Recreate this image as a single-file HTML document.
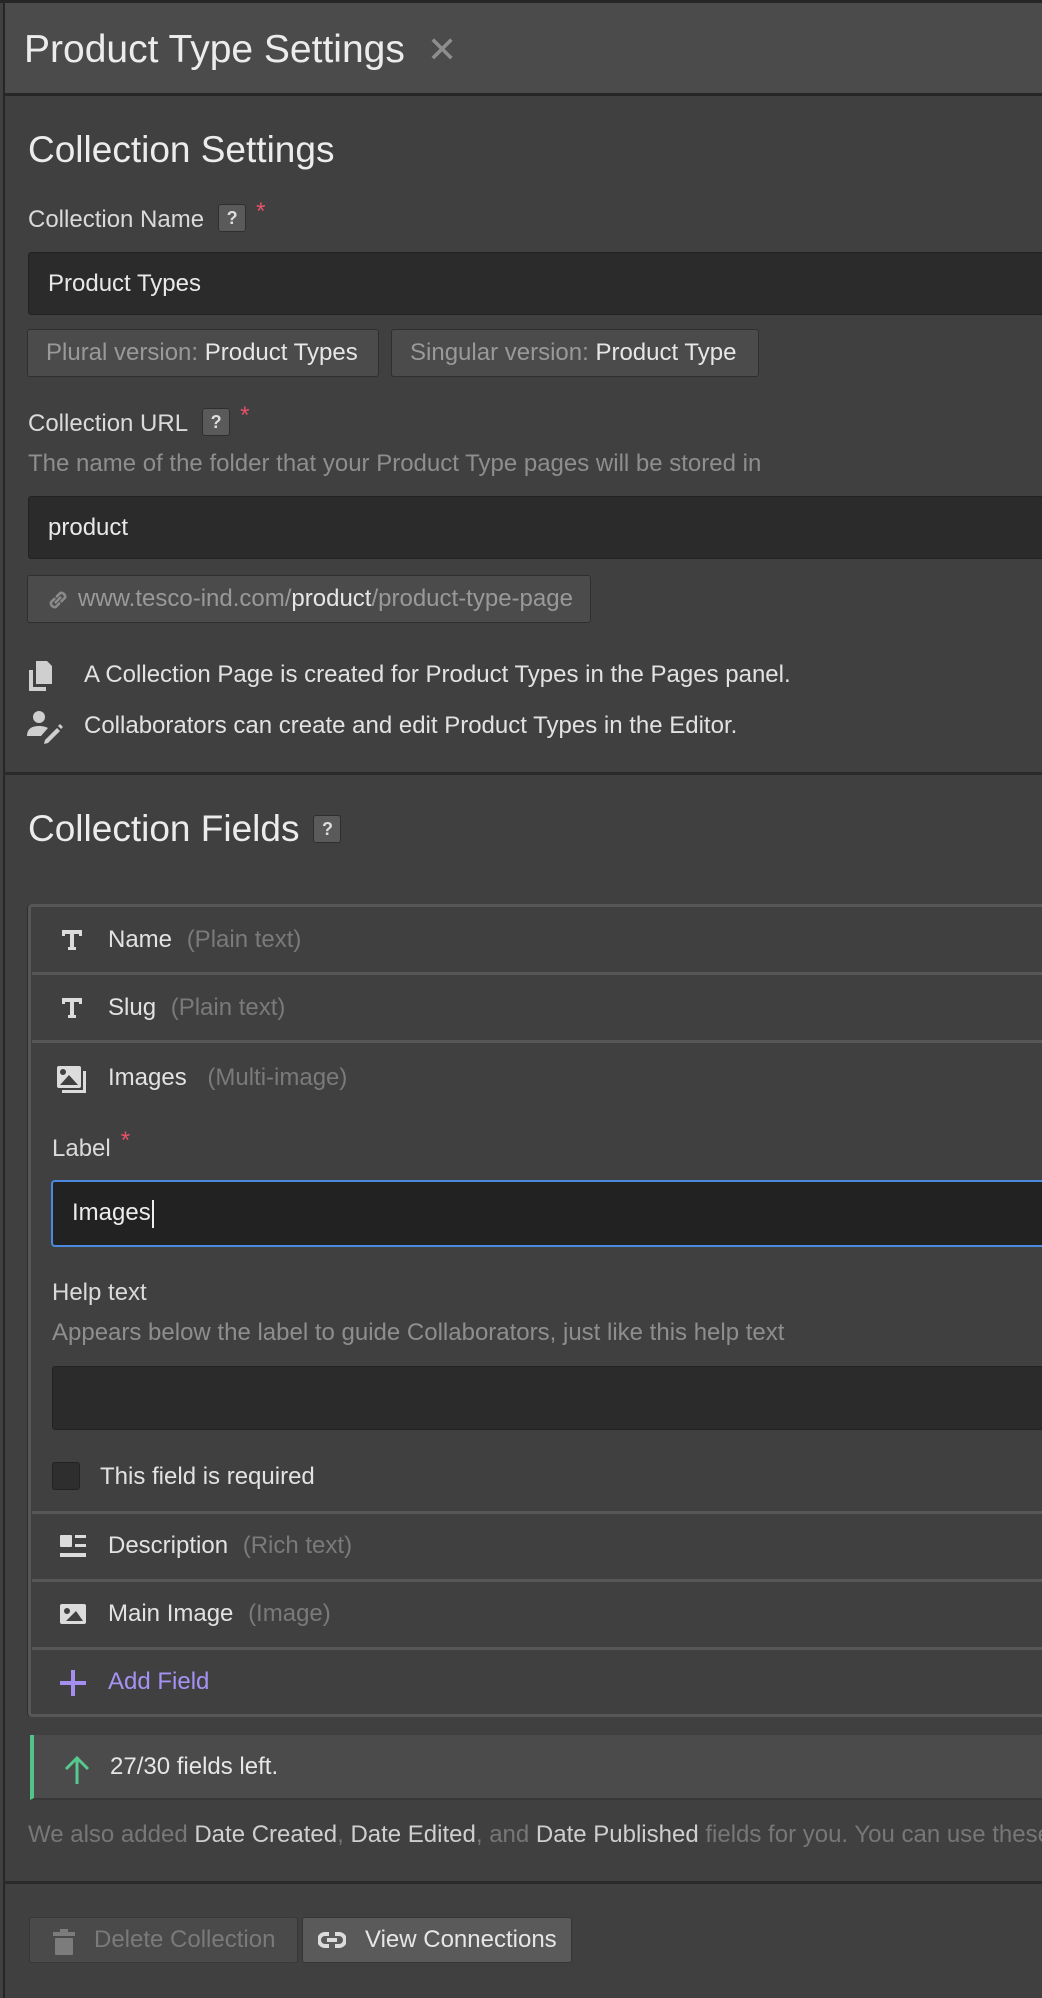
<!DOCTYPE html>
<html><head><meta charset="utf-8"><style>
*{margin:0;padding:0;box-sizing:border-box}
body{width:1042px;height:1998px;background:#404040;font-family:"Liberation Sans",sans-serif;position:relative;overflow:hidden;color:#ddd}
.a{position:absolute;white-space:nowrap}
.t{position:absolute;white-space:nowrap;line-height:30px;height:30px}
.q{display:inline-block;width:28px;height:28px;background:#5a5a5a;border:1px solid #2e2e2e;border-radius:3px;color:#ddd;font-size:18px;font-weight:bold;text-align:center;line-height:26px;vertical-align:middle;margin-left:14px;position:relative;top:-3px}
.star{color:#e8536a;font-size:24px;margin-left:10px;position:relative;top:-8px}
.inp{position:absolute;left:28px;right:-10px;background:#2b2b2b;border:1px solid #222;border-radius:3px}
.pill{position:absolute;background:#4b4b4b;border:1px solid #2f2f2f;border-radius:3px;font-size:24px;line-height:46px;padding-left:18px;color:#999}
.pill b{font-weight:normal;color:#e6e6e6}
.row{position:absolute;left:32px;right:0;border-bottom:3px solid #575757}
.g{color:#7a7a7a}
</style></head><body>
<div class="a" style="left:0;top:0;width:1042px;height:3px;background:#262626"></div>
<div class="a" style="left:3px;top:0;width:2px;height:1998px;background:#262626"></div>
<div class="a" style="left:5px;top:3px;width:1037px;height:91px;background:#4b4b4b"></div>
<div class="a" style="left:3px;top:93px;width:1039px;height:3px;background:#262626"></div>
<div class="t" style="left:24px;top:27px;height:46px;line-height:46px;font-size:39px;color:#ececec">Product Type Settings</div>
<div class="a" style="left:427px;top:32px;font-size:36px;line-height:36px;color:#8e8e8e">✕</div>

<div class="t" style="left:28px;top:129px;height:42px;line-height:42px;font-size:37px;color:#ececec">Collection Settings</div>

<div class="t" style="left:28px;top:205px;font-size:24px;color:#dadada">Collection Name<span class="q">?</span><span class="star">*</span></div>
<div class="inp" style="top:252px;height:63px"><div class="t" style="left:19px;top:16px;font-size:24px;color:#e8e8e8">Product Types</div></div>

<div class="pill" style="left:27px;top:329px;width:352px;height:48px">Plural version: <b>Product Types</b></div>
<div class="pill" style="left:391px;top:329px;width:368px;height:48px">Singular version: <b>Product Type</b></div>

<div class="t" style="left:28px;top:409px;font-size:24px;color:#dadada">Collection URL<span class="q">?</span><span class="star">*</span></div>
<div class="t" style="left:28px;top:449px;font-size:24px;color:#8e8e8e">The name of the folder that your Product Type pages will be stored in</div>
<div class="inp" style="top:496px;height:63px"><div class="t" style="left:19px;top:16px;font-size:24px;color:#e8e8e8">product</div></div>

<div class="pill" style="left:27px;top:575px;width:564px;height:48px;padding-left:50px">
<svg style="position:absolute;left:17px;top:11px" width="26" height="26" viewBox="0 0 22 22" fill="none" stroke="#8a8a8a" stroke-width="2.2" stroke-linecap="round"><path d="M9 13 L13 9"/><path d="M8 10 L5 13 A3.5 3.5 0 0 0 9 17 L12 14"/><path d="M14 12 L17 9 A3.5 3.5 0 0 0 13 5 L10 8"/></svg>www.tesco-ind.com/<b>product</b>/product-type-page</div>

<svg class="a" style="left:28px;top:661px" width="26" height="30" viewBox="0 0 26 30"><path d="M8 0 H19 L24 5 V23 H8 Z" fill="#cfcfcf"/><path d="M1 9 H5 V26 H18 V30 H1 Z" fill="#cfcfcf"/></svg>
<div class="t" style="left:84px;top:660px;font-size:24px;color:#e2e2e2">A Collection Page is created for Product Types in the Pages panel.</div>
<svg class="a" style="left:27px;top:710px" width="36" height="34" viewBox="0 0 36 34"><circle cx="12" cy="7" r="6" fill="#cfcfcf"/><path d="M0 26 C0 18 6 16 12 16 C16 16 19 17 21 18 L14 26 Z" fill="#cfcfcf"/><path d="M18 30 L30 18 L33 21 L21 33 L17 34 Z" fill="#cfcfcf"/><path d="M31 16 L33 14 L36 17 L34 19 Z" fill="#cfcfcf"/></svg>
<div class="t" style="left:84px;top:711px;font-size:24px;color:#e2e2e2">Collaborators can create and edit Product Types in the Editor.</div>

<div class="a" style="left:3px;top:772px;width:1039px;height:3px;background:#2a2a2a"></div>

<div class="t" style="left:28px;top:808px;height:42px;line-height:42px;font-size:37px;color:#ececec">Collection Fields<span class="q" style="margin-left:14px;top:-2px">?</span></div>

<div class="a" style="left:28px;top:904px;width:1020px;height:813px;border:3px solid #575757;border-right:none;border-radius:4px 0 0 4px;box-shadow:-1px 0 0 #2e2e2e"></div>
<div class="row" style="top:907px;height:68px"></div>
<div class="row" style="top:975px;height:68px"></div>
<div class="row" style="top:1043px;height:471px"></div>
<div class="row" style="top:1514px;height:68px"></div>
<div class="row" style="top:1582px;height:68px"></div>

<svg class="a" style="left:61px;top:929px" width="22" height="22" viewBox="0 0 22 22" fill="#dcdcdc"><path d="M1 1 H21 V7 H18 V5 H13 V18 H15 V21 H7 V18 H9 V5 H4 V7 H1 Z"/></svg>
<div class="t" style="left:108px;top:925px;font-size:24px;color:#e2e2e2">Name <span class="g" style="margin-left:8px">(Plain text)</span></div>
<svg class="a" style="left:61px;top:997px" width="22" height="22" viewBox="0 0 22 22" fill="#dcdcdc"><path d="M1 1 H21 V7 H18 V5 H13 V18 H15 V21 H7 V18 H9 V5 H4 V7 H1 Z"/></svg>
<div class="t" style="left:108px;top:993px;font-size:24px;color:#e2e2e2">Slug <span class="g" style="margin-left:8px">(Plain text)</span></div>
<svg class="a" style="left:57px;top:1066px" width="30" height="28" viewBox="0 0 30 28"><rect x="0" y="0" width="24" height="22" rx="2" fill="#dcdcdc"/><circle cx="6" cy="6" r="3" fill="#404040"/><path d="M3 19 L12 9 L21 19 Z" fill="#404040"/><path d="M26 5 H29 V27 H5 V24 H26 Z" fill="#dcdcdc"/></svg>
<div class="t" style="left:108px;top:1063px;font-size:24px;color:#e2e2e2">Images <span class="g" style="margin-left:14px">(Multi-image)</span></div>

<div class="t" style="left:52px;top:1134px;font-size:24px;color:#dadada">Label<span class="star">*</span></div>
<div class="a" style="left:51px;top:1180px;width:1000px;height:67px;background:#222;border:2px solid #4a8ae0;border-radius:4px"></div>
<div class="t" style="left:72px;top:1198px;font-size:24px;color:#ececec">Images<span style="display:inline-block;width:2px;height:28px;background:#eee;vertical-align:middle;margin-left:1px"></span></div>

<div class="t" style="left:52px;top:1278px;font-size:24px;color:#dadada">Help text</div>
<div class="t" style="left:52px;top:1318px;font-size:24px;color:#8e8e8e">Appears below the label to guide Collaborators, just like this help text</div>
<div class="a" style="left:52px;top:1366px;width:1000px;height:64px;background:#2b2b2b;border:1px solid #222;border-radius:3px"></div>
<div class="a" style="left:52px;top:1462px;width:28px;height:28px;background:#2e2e2e;border:1px solid #222;border-radius:3px"></div>
<div class="t" style="left:100px;top:1462px;font-size:24px;color:#e2e2e2">This field is required</div>

<svg class="a" style="left:60px;top:1535px" width="26" height="22" viewBox="0 0 26 22" fill="#dcdcdc"><rect x="0" y="0" width="12" height="12" rx="1"/><rect x="15" y="0" width="11" height="3"/><rect x="15" y="9" width="11" height="3"/><rect x="0" y="18" width="26" height="4"/></svg>
<div class="t" style="left:108px;top:1531px;font-size:24px;color:#e2e2e2">Description <span class="g" style="margin-left:8px">(Rich text)</span></div>
<svg class="a" style="left:60px;top:1604px" width="26" height="20" viewBox="0 0 26 20"><rect width="26" height="20" rx="2" fill="#dcdcdc"/><circle cx="7" cy="7" r="3" fill="#404040"/><path d="M6 17 L16 7 L23 17 Z" fill="#404040"/></svg>
<div class="t" style="left:108px;top:1599px;font-size:24px;color:#e2e2e2">Main Image <span class="g" style="margin-left:8px">(Image)</span></div>
<svg class="a" style="left:60px;top:1670px" width="26" height="26" viewBox="0 0 26 26"><rect x="11" y="0" width="4" height="26" fill="#a48ff0"/><rect x="0" y="11" width="26" height="4" fill="#a48ff0"/></svg>
<div class="t" style="left:108px;top:1667px;font-size:24px;color:#a592f2">Add Field</div>

<div class="a" style="left:30px;top:1735px;width:1020px;height:65px;background:#4b4b4b;border-left:4px solid #52c48a;border-bottom:2px solid #383838"></div>
<svg class="a" style="left:64px;top:1755px" width="26" height="30" viewBox="0 0 26 30" fill="none" stroke="#56c98e" stroke-width="3"><path d="M13 29 V3"/><path d="M2 14 L13 3 L24 14"/></svg>
<div class="t" style="left:110px;top:1752px;font-size:24px;color:#e6e6e6">27/30 fields left.</div>

<div class="t" style="left:28px;top:1820px;font-size:24px;color:#777">We also added <span style="color:#cfcfcf">Date Created</span>, <span style="color:#cfcfcf">Date Edited</span>, and <span style="color:#cfcfcf">Date Published</span> fields for you. You can use these</div>

<div class="a" style="left:3px;top:1881px;width:1039px;height:3px;background:#2a2a2a"></div>

<div class="a" style="left:29px;top:1917px;width:269px;height:46px;background:#4a4a4a;border:1px solid #383838;border-radius:3px"></div>
<svg class="a" style="left:53px;top:1929px" width="22" height="26" viewBox="0 0 22 26" fill="#7c7c7c"><rect x="7" y="0" width="8" height="3"/><rect x="0" y="3" width="22" height="4"/><rect x="2" y="9" width="18" height="17" rx="1"/></svg>
<div class="t" style="left:94px;top:1925px;font-size:24px;color:#7a7a7a">Delete Collection</div>
<div class="a" style="left:302px;top:1917px;width:270px;height:46px;background:#5a5a5a;border:1px solid #353535;border-radius:3px"></div>
<svg class="a" style="left:318px;top:1932px" width="28" height="16" viewBox="0 0 28 16" fill="none" stroke="#dcdcdc" stroke-width="4"><path d="M11 2 H7 A6 6 0 0 0 7 14 H11"/><path d="M17 2 H21 A6 6 0 0 1 21 14 H17"/><path d="M9 8 H19"/></svg>
<div class="t" style="left:365px;top:1925px;font-size:24px;color:#e6e6e6">View Connections</div>
</body></html>
